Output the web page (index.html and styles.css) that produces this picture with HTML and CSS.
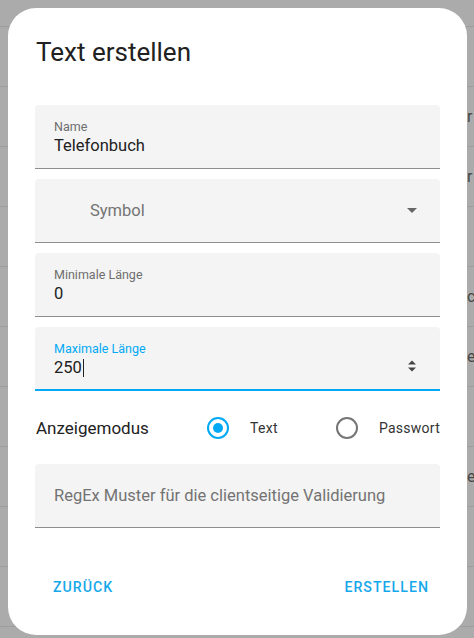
FILE: index.html
```html
<!DOCTYPE html>
<html lang="de">
<head>
<meta charset="utf-8">
<title>Text erstellen</title>
<link rel="stylesheet" href="styles.css">
</head>
<body>
<div class="page">
  <div class="row row-first"></div>
  <div class="row"></div>
  <div class="row"><span class="peek">r</span></div>
  <div class="row"><span class="peek">r</span></div>
  <div class="row"></div>
  <div class="row"><span class="peek">c</span></div>
  <div class="row"><span class="peek">e</span></div>
  <div class="row"></div>
  <div class="row"><span class="peek">e</span></div>
  <div class="row"></div>
  <div class="row"></div>
</div>

<div class="dialog">
  <h2 class="title">Text erstellen</h2>
  <div class="form">
    <div class="field">
      <div class="label">Name</div>
      <div class="value">Telefonbuch</div>
    </div>
    <div class="field field-select">
      <span class="placeholder">Symbol</span>
      <svg class="arrow" width="10" height="5" viewBox="0 0 10 5"><path d="M0 0 L10 0 L5 5 Z" fill="#666"/></svg>
    </div>
    <div class="field">
      <div class="label">Minimale Länge</div>
      <div class="value">0</div>
    </div>
    <div class="field field-focused">
      <div class="field-main">
        <div class="label label-focused">Maximale Länge</div>
        <div class="value">250<span class="caret"></span></div>
      </div>
      <svg class="spinner" width="8" height="12" viewBox="0 0 8 12"><path d="M0 4.5 L4 0.5 L8 4.5 Z M0 7.5 L8 7.5 L4 11.5 Z" fill="#444"/></svg>
    </div>
    <div class="radio-row">
      <span class="radio-title">Anzeigemodus</span>
      <span class="radio-item">
        <span class="radio radio-on"><span class="dot"></span></span>
        <span class="radio-label">Text</span>
      </span>
      <span class="radio-item">
        <span class="radio"></span>
        <span class="radio-label">Passwort</span>
      </span>
    </div>
    <div class="field field-plain">
      <span class="placeholder">RegEx Muster für die clientseitige Validierung</span>
    </div>
  </div>
  <div class="actions">
    <span class="btn">ZURÜCK</span>
    <span class="btn">ERSTELLEN</span>
  </div>
</div>
</body>
</html>
```

FILE: styles.css
```css
html, body {
  margin: 0;
  padding: 0;
}
body {
  background: #ababab;
  font-family: Roboto, "Noto Sans", sans-serif;
  width: 474px;
  height: 638px;
  overflow: hidden;
}
.page {
  display: flex;
  flex-direction: column;
}
.row {
  height: 60px;
  box-sizing: border-box;
  border-bottom: 1px solid #9d9d9d;
  padding-left: 467px;
  display: flex;
  align-items: center;
  font-size: 16px;
  color: #474747;
}
.row-first {
  height: 27px;
}
.dialog {
  position: fixed;
  top: 8px;
  left: 8px;
  width: 459px;
  height: 627px;
  box-sizing: border-box;
  background: #ffffff;
  border-radius: 28px;
  padding: 28px 27px 0 27px;
  display: flex;
  flex-direction: column;
}
.title {
  margin: 0 0 0 1px;
  font-size: 26px;
  line-height: 32px;
  font-weight: 400;
  color: #212121;
}
.form {
  margin-top: 37px;
  display: flex;
  flex-direction: column;
  gap: 10px;
}
.field {
  height: 64px;
  box-sizing: border-box;
  background: #f4f4f4;
  border-radius: 4px 4px 0 0;
  border-bottom: 1px solid #8e8e8e;
  padding: 14px 19px 0 19px;
}
.label {
  font-size: 12.5px;
  line-height: 15px;
  color: #6e6e6e;
}
.label-focused {
  color: #03a9f4;
}
.value {
  margin-top: 2px;
  font-size: 16.5px;
  line-height: 20px;
  color: #212121;
  display: flex;
  align-items: center;
}
.caret {
  display: inline-block;
  width: 1px;
  height: 18px;
  background: #222;
  margin-left: 1px;
}
.field-select {
  display: flex;
  align-items: center;
  justify-content: space-between;
  padding: 0 23px 0 55px;
}
.placeholder {
  font-size: 16.5px;
  color: #737373;
}
.field-focused {
  border-bottom: 2px solid #03a9f4;
  display: flex;
  align-items: flex-start;
  justify-content: space-between;
  padding-right: 24px;
}
.spinner {
  margin-top: 19px;
}
.field-plain {
  display: flex;
  align-items: center;
  padding-top: 0;
}
.radio-row {
  height: 53px;
  display: flex;
  align-items: center;
  justify-content: space-between;
  padding-left: 1px;
}
.radio-title {
  font-size: 17px;
  color: #212121;
}
.radio-item {
  display: flex;
  align-items: center;
  gap: 21px;
}
.radio {
  width: 22px;
  height: 22px;
  box-sizing: border-box;
  border: 2px solid #757575;
  border-radius: 50%;
  display: flex;
  align-items: center;
  justify-content: center;
}
.radio-on {
  border-color: #03a9f4;
}
.dot {
  width: 10px;
  height: 10px;
  border-radius: 50%;
  background: #03a9f4;
}
.radio-label {
  font-size: 14px;
  letter-spacing: 0.25px;
  color: #333333;
}
.actions {
  margin-top: 49px;
  display: flex;
  justify-content: space-between;
  padding: 0 11px 0 18px;
}
.btn {
  font-size: 14.2px;
  line-height: 20px;
  font-weight: 500;
  letter-spacing: 1px;
  color: #17a8ea;
}
```
